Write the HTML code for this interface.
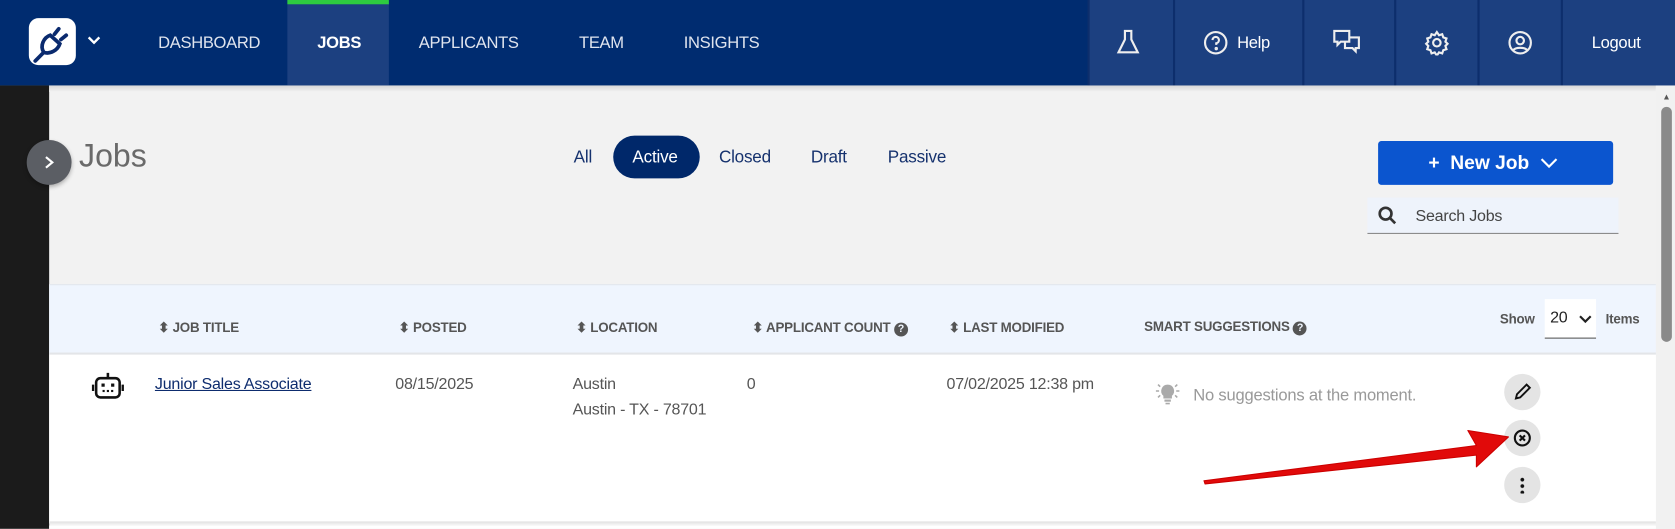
<!DOCTYPE html>
<html><head><meta charset="utf-8"><style>
*{margin:0;padding:0;box-sizing:border-box}
html,body{width:1675px;height:529px;overflow:hidden;background:#f2f2f2;font-family:"Liberation Sans",sans-serif}
#w{position:absolute;left:0;top:0;width:1568px;height:495px;transform:scale(1.0683);transform-origin:0 0}
.a{position:absolute}
.nav{left:0;top:0;width:1568px;height:80px;background:#002c70}
.ni{top:32px;color:#dfe4ee;font-size:15.5px;letter-spacing:-.3px}
.rp{top:0;height:80px;background:#1c4080;border-left:2px solid #0d2e6c}
.th{top:299px;font-size:12.5px;font-weight:bold;color:#555;letter-spacing:-.2px}
.td{font-size:15px;color:#555;letter-spacing:-.2px}
.cb{width:34px;height:34px;border-radius:50%;background:#e4e4e4;left:1408px}
</style></head><body><div id="w">
<div class="a nav"></div>
<div class="a" style="left:27px;top:17px;width:44px;height:44px;background:#fff;border-radius:9px"></div>
<svg class="a" style="left:27px;top:17px" width="44" height="44" viewBox="0 0 44 44"><g stroke="#0a2a6e" stroke-width="3.5" fill="none" stroke-linecap="round"><path d="M6 40 L14 32"/><path d="M14 32 C10 26 14 18 20 16 L29 24 C27 30 20 34 14 32Z"/><path d="M24 15 L28 10 M30 20 L35 16"/></g></svg>
<svg class="a" style="left:82px;top:33px" width="12" height="10"><path d="M1 2 L6 7 L11 2" stroke="#fff" stroke-width="2.2" fill="none"/></svg>
<div class="a ni" style="left:148px">DASHBOARD</div>
<div class="a" style="left:269px;top:0;width:95px;height:80px;background:#1c4080;border-top:4px solid #2ecc40"></div>
<div class="a ni" style="left:297px;color:#fff;font-weight:bold">JOBS</div>
<div class="a ni" style="left:392px">APPLICANTS</div>
<div class="a ni" style="left:542px">TEAM</div>
<div class="a ni" style="left:640px">INSIGHTS</div>
<div class="a rp" style="left:1018px;width:81px"></div>
<div class="a rp" style="left:1098px;width:122px"></div>
<div class="a rp" style="left:1219px;width:87px"></div>
<div class="a rp" style="left:1305px;width:79px"></div>
<div class="a rp" style="left:1383px;width:79px"></div>
<div class="a rp" style="left:1461px;width:107px"></div>
<svg class="a" style="left:1044px;top:27px" width="24" height="26" fill="none" stroke="#eee" stroke-width="2"><path d="M8 2h8M9 2v8L3 22h18L15 10V2"/></svg>
<svg class="a" style="left:1126px;top:28px" width="24" height="24" fill="none" stroke="#eee" stroke-width="2"><circle cx="12" cy="12" r="10"/><path d="M9 9.5a3 3 0 1 1 3.5 3V14"/><circle cx="12.5" cy="17.5" r=".6" fill="#eee"/></svg>
<div class="a ni" style="left:1158px;color:#fff">Help</div>
<svg class="a" style="left:1247px;top:27px" width="28" height="24" fill="none" stroke="#eee" stroke-width="2"><path d="M2 2h14v10H8l-3 3v-3H2z"/><path d="M16 8h9v10h-3v3l-3-3h-7v-6"/></svg>
<svg class="a" style="left:1333px;top:28px" width="24" height="24" fill="none" stroke="#eee" stroke-width="2"><path d="M12 2l2 3 3-1 1 3 3 1-1 3 2 2-2 2 1 3-3 1-1 3-3-1-2 3-2-3-3 1-1-3-3-1 1-3-2-2 2-2-1-3 3-1 1-3 3 1z"/><circle cx="12" cy="12" r="3.5"/></svg>
<svg class="a" style="left:1411px;top:28px" width="24" height="24" fill="none" stroke="#eee" stroke-width="2"><circle cx="12" cy="12" r="10"/><circle cx="12" cy="10" r="3.5"/><path d="M5.5 19c2-3 11-3 13 0"/></svg>
<div class="a ni" style="left:1490px;color:#fff">Logout</div>
<div class="a" style="left:0;top:80px;width:46px;height:415px;background:#1b1b1b"></div>
<div class="a" style="left:46px;top:80px;width:1504px;height:6px;background:linear-gradient(#d8d8d8,#f2f2f2)"></div>
<div class="a" style="left:1550px;top:80px;width:18px;height:415px;background:#f1f1f1"></div>
<div class="a" style="left:1555px;top:100px;width:10px;height:220px;background:#8a8a8a;border-radius:5px"></div>
<div class="a" style="left:1556px;top:86px;font-size:8px;color:#555">▲</div>
<div class="a" style="left:25px;top:131px;width:42px;height:42px;border-radius:50%;background:#5b5e64;box-shadow:0 2px 4px rgba(0,0,0,.3)"></div>
<svg class="a" style="left:39px;top:145px" width="14" height="14"><path d="M4 2l6 5-6 5" stroke="#fff" stroke-width="2" fill="none"/></svg>
<div class="a" style="left:74px;top:130px;font-size:30px;color:#6a6a6a;font-weight:300">Jobs</div>
<div class="a" style="left:574px;top:127px;width:81px;height:40px;border-radius:20px;background:#00286a"></div>
<div class="a td" style="left:537px;top:139px;color:#16326e;font-size:16px">All</div>
<div class="a td" style="left:592px;top:139px;color:#fff;font-size:16px">Active</div>
<div class="a td" style="left:673px;top:139px;color:#16326e;font-size:16px">Closed</div>
<div class="a td" style="left:759px;top:139px;color:#16326e;font-size:16px">Draft</div>
<div class="a td" style="left:831px;top:139px;color:#16326e;font-size:16px">Passive</div>
<div class="a" style="left:1290px;top:132px;width:220px;height:41px;background:#0b55cf;border-radius:3px;color:#fff;font-weight:bold;font-size:18px;line-height:41px;padding-left:47px">+&nbsp; New Job <svg width="18" height="12" style="margin-left:4px"><path d="M2 3l7 7 7-7" stroke="#fff" stroke-width="2" fill="none"/></svg></div>
<div class="a" style="left:1280px;top:185px;width:235px;height:34px;background:#eef3fb;border-bottom:1px solid #888"></div>
<svg class="a" style="left:1290px;top:193px" width="18" height="18" fill="none" stroke="#333" stroke-width="2.5"><circle cx="7" cy="7" r="5.5"/><path d="M11 11l5 5"/></svg>
<div class="a td" style="left:1325px;top:194px;color:#444">Search Jobs</div>
<div class="a" style="left:46px;top:266px;width:1504px;height:66px;background:#eff5fe;border-top:1px solid #e2e6ec;border-bottom:2px solid #e3e5e8"></div>
<div class="a th" style="left:148px">⬍ JOB TITLE</div>
<div class="a th" style="left:373px">⬍ POSTED</div>
<div class="a th" style="left:539px">⬍ LOCATION</div>
<div class="a th" style="left:704px">⬍ APPLICANT COUNT <span style="display:inline-block;width:13px;height:13px;border-radius:50%;background:#555;color:#eff5fe;font-size:10px;text-align:center;line-height:13px">?</span></div>
<div class="a th" style="left:888px">⬍ LAST MODIFIED</div>
<div class="a th" style="left:1071px">SMART SUGGESTIONS <span style="display:inline-block;width:13px;height:13px;border-radius:50%;background:#555;color:#eff5fe;font-size:10px;text-align:center;line-height:13px">?</span></div>
<div class="a th" style="left:1404px;top:292px">Show</div>
<div class="a" style="left:1446px;top:280px;width:48px;height:37px;background:#fff;border-bottom:1px solid #555"></div>
<div class="a td" style="left:1451px;top:289px;color:#222">20</div>
<svg class="a" style="left:1478px;top:295px" width="12" height="8"><path d="M1 1l5 5 5-5" stroke="#222" stroke-width="2" fill="none"/></svg>
<div class="a th" style="left:1503px;top:292px">Items</div>
<div class="a" style="left:46px;top:332px;width:1504px;height:158px;background:#fff;border-bottom:2px solid #e6e6e6"></div>
<div class="a" style="left:46px;top:492px;width:1504px;height:3px;background:#fff"></div>
<svg class="a" style="left:86px;top:347px" width="30" height="28" fill="none" stroke="#111" stroke-width="2.4"><rect x="4" y="7" width="22" height="18" rx="4"/><path d="M15 7V2M1 13v6M29 13v6"/><g fill="#111" stroke="none"><rect x="9" y="12" width="3" height="3"/><rect x="18" y="12" width="3" height="3"/><rect x="10" y="18" width="2" height="2"/><rect x="14" y="18" width="2" height="2"/><rect x="18" y="18" width="2" height="2"/></g></svg>
<div class="a td" style="left:145px;top:351px;color:#0d2c6e;text-decoration:underline">Junior Sales Associate</div>
<div class="a td" style="left:370px;top:351px">08/15/2025</div>
<div class="a td" style="left:536px;top:351px">Austin</div>
<div class="a td" style="left:536px;top:375px">Austin - TX - 78701</div>
<div class="a td" style="left:699px;top:351px">0</div>
<div class="a td" style="left:886px;top:351px">07/02/2025 12:38 pm</div>
<svg class="a" style="left:1081px;top:357px" width="24" height="22" fill="#aaa"><path d="M12 3a6 6 0 0 0-4 10.5V16h8v-2.5A6 6 0 0 0 12 3z"/><rect x="9" y="17" width="6" height="2"/><rect x="10" y="20" width="4" height="1.5"/><g stroke="#aaa" stroke-width="1.5"><path d="M1 9h3M20 9h3M3 3l2 2M21 3l-2 2M3 15l2-2M21 15l-2-2"/></g></svg>
<div class="a td" style="left:1117px;top:362px;color:#999;font-size:15.5px">No suggestions at the moment.</div>
<div class="a cb" style="top:350px"></div>
<svg class="a" style="left:1416px;top:358px" width="18" height="18" fill="none" stroke="#111" stroke-width="1.8"><path d="M3 15l1-4 9-9 3 3-9 9z"/></svg>
<div class="a cb" style="top:393px"></div>
<svg class="a" style="left:1416px;top:401px" width="18" height="18" fill="none" stroke="#111" stroke-width="2"><circle cx="9" cy="9" r="7"/><path d="M6.5 6.5l5 5M11.5 6.5l-5 5"/></svg>
<div class="a cb" style="top:437px"></div>
<div class="a" style="left:1423px;top:446px;width:4px;height:16px;background:radial-gradient(circle,#111 1.5px,transparent 2px) 0 0/4px 6px"></div>
<svg class="a" style="left:1120px;top:395px" width="300" height="65"><path d="M7 55 L262 22 L254 8 L292 14 L262 42 L262 31 L8 58 Z" fill="#e10a0a" stroke="#c00" stroke-width="1" stroke-linejoin="round"/></svg>
</div></body></html>
